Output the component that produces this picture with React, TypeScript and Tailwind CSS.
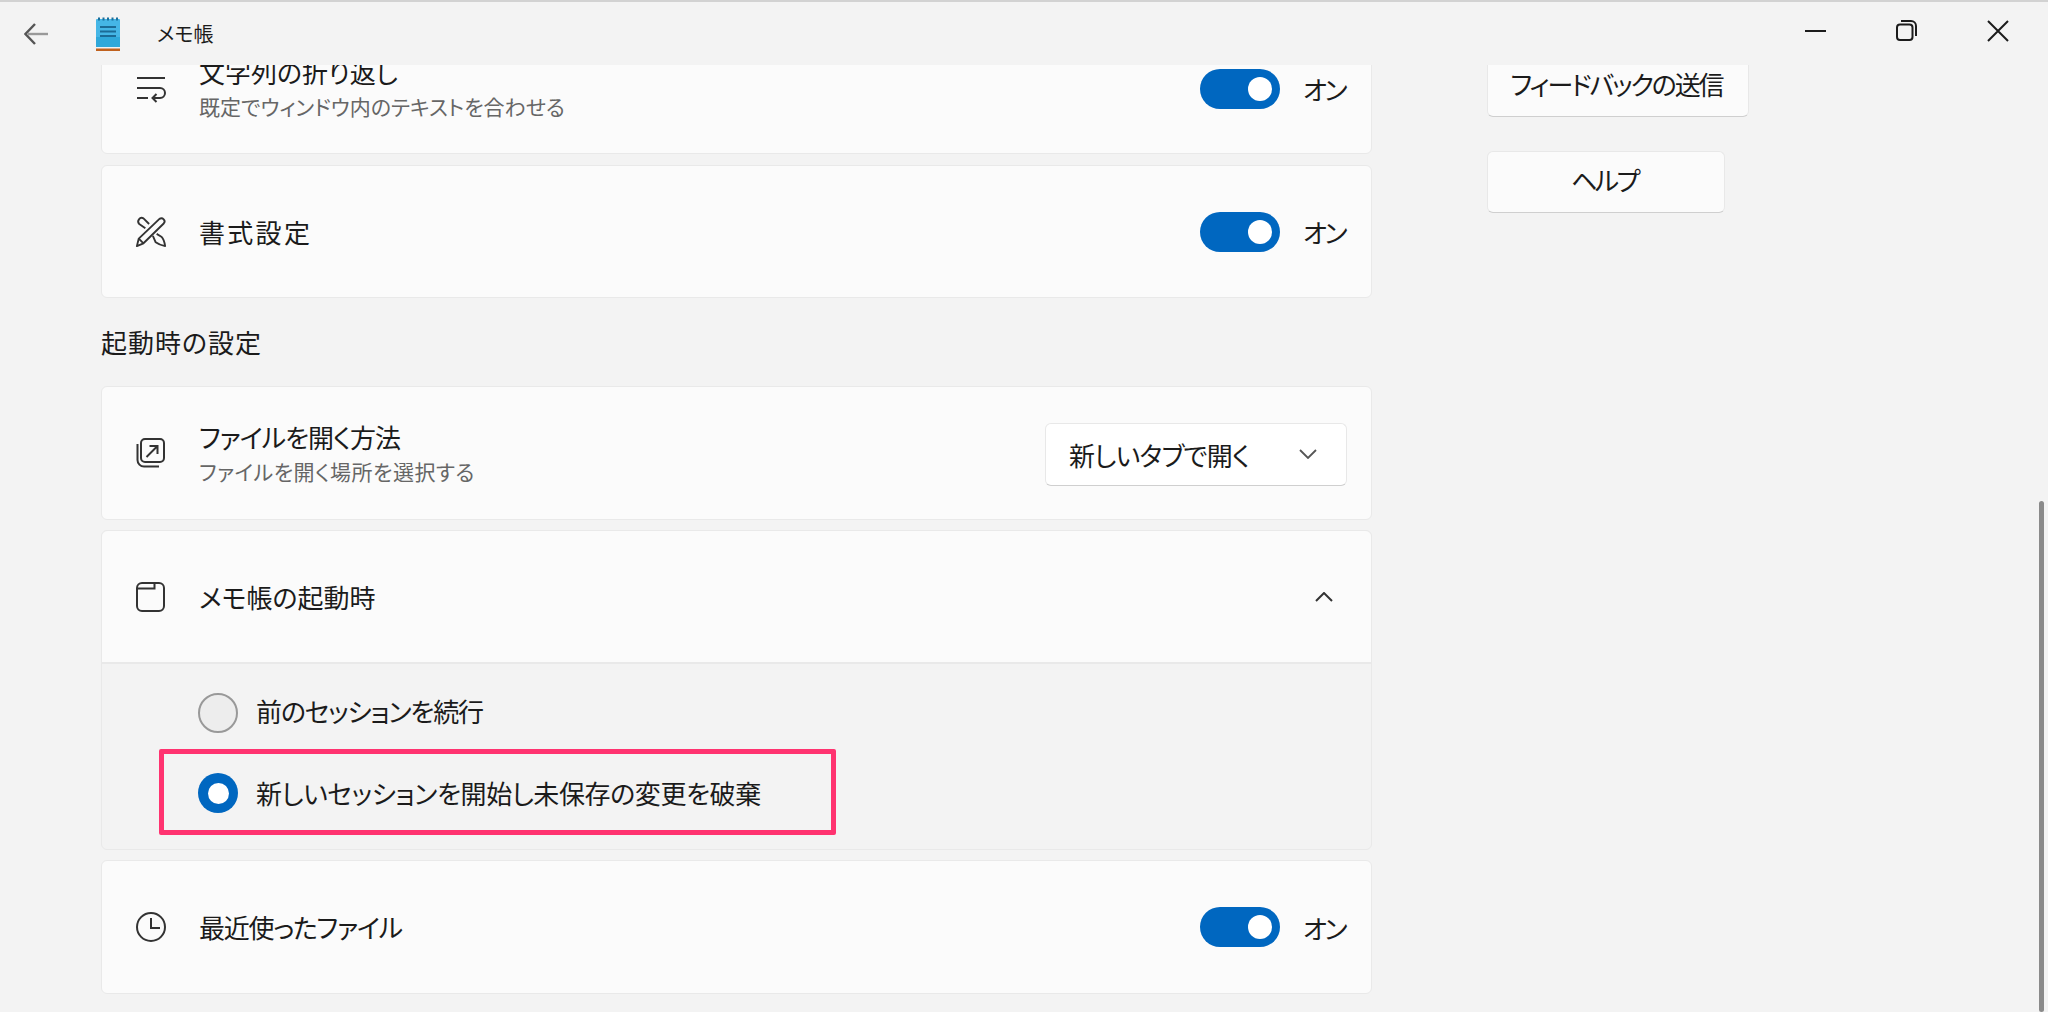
import type { ReactNode } from "react";

function Toggle() {
  return (
    <div className="flex items-center">
      <div className="flex h-[40px] w-[80px] items-center justify-end rounded-full bg-[#0067c0] pr-[8px]">
        <div className="h-[24px] w-[24px] rounded-full bg-white" />
      </div>
      <span className="ml-[23px] w-[43px] pt-[1px] text-[26px] leading-[40px] tracking-[-2.6px] text-[#1b1b1b]">オン</span>
    </div>
  );
}

function WrapIcon() {
  return (
    <svg width="30" height="28" viewBox="0 0 30 28" fill="none" stroke="#333" strokeWidth="2">
      <path d="M1 3h28M1 13h23a4.500 4.500 0 0 1 0 10h-7M1 23h11" />
      <path d="M20.500 19l-4 4 4 4" />
    </svg>
  );
}

function FormatIcon() {
  return (
    <svg width="34" height="34" viewBox="0 0 34 34" fill="none" stroke="#333" strokeWidth="2" strokeLinejoin="round">
      <path d="M2 32l2-8L26 3q2.500-1.500 4.500 0.500t0 4.500L9 29z" />
      <path d="M4 24l5 5" />
      <path d="M11 13L4.500 8.500a3.800 3.800 0 0 1 4.500-6l6 6" />
      <path d="M19 21l3 7q4 3 10 4q-1-7-4-10l-5-3" />
    </svg>
  );
}

function OpenIcon() {
  return (
    <svg width="30" height="30" viewBox="0 0 30 30" fill="none" stroke="#333" strokeWidth="2">
      <rect x="5" y="1" width="23" height="23" rx="4" />
      <path d="M1.500 6v16a6.500 6.500 0 0 0 6.500 6.500h15" />
      <path d="M10.500 19L21 8.500M13.500 8h8v8" />
    </svg>
  );
}

function WindowIcon() {
  return (
    <svg width="30" height="30" viewBox="0 0 30 30" fill="none" stroke="#333" strokeWidth="2">
      <rect x="1" y="1" width="27" height="28" rx="5" />
      <path d="M1 6.500h17.500V1" />
    </svg>
  );
}

function ClockIcon() {
  return (
    <svg width="30" height="32" viewBox="0 0 30 32" fill="none" stroke="#333" strokeWidth="2">
      <circle cx="15" cy="16" r="14" />
      <path d="M15 7v10h9" />
    </svg>
  );
}

function Notepad() {
  return (
    <svg width="24" height="34" viewBox="0 0 24 34">
      <rect x="0" y="2" width="24" height="28" rx="1" fill="#45b6e6" />
      <rect x="0" y="20" width="24" height="10" fill="#2fa8da" />
      <path d="M3 0.500v3M7.500 0.500v3M12 0.500v3M16.500 0.500v3M21 0.500v3" stroke="#1a6f9c" strokeWidth="2" />
      <path d="M4 10h16M4 14.500h16M4 19h16" stroke="#1b6b96" strokeWidth="1.800" />
      <rect x="0" y="30" width="24" height="1.500" fill="#f2f2f2" />
      <rect x="0" y="31.500" width="24" height="2.500" fill="#c0611e" />
    </svg>
  );
}

function Row({ icon, title, titleClass = "", sub, subClass = "", right }: { icon: ReactNode; title: string; titleClass?: string; sub?: string; subClass?: string; right: ReactNode }) {
  return (
    <div className="flex h-full items-center justify-between pl-[33px] pr-[25px]">
      <div className="flex items-center">
        <div className="flex w-[32px] justify-center">{icon}</div>
        <div className={sub ? "ml-[32px]" : "ml-[32px] pb-[1px]"}>
          <div className={`text-[26px] leading-[35px] text-[#1b1b1b] ${titleClass}`}>{title}</div>
          {sub && <div className={`text-[21px] leading-[34px] text-[#666] ${subClass}`}>{sub}</div>}
        </div>
      </div>
      {right}
    </div>
  );
}

const card = "rounded-[6px] border border-[#e9e9e9]";

function Radio({ on, label, labelClass }: { on?: boolean; label: string; labelClass: string }) {
  return (
    <div className="flex h-[40px] items-center">
      {on ? (
        <div className="flex h-[40px] w-[40px] items-center justify-center rounded-full bg-[#0067c0]">
          <div className="h-[21px] w-[21px] rounded-full bg-white" />
        </div>
      ) : (
        <div className="h-[40px] w-[40px] rounded-full border-2 border-[#999] bg-[#ededed]" />
      )}
      <span className={`ml-[18px] text-[26px] text-[#1b1b1b] ${labelClass}`}>{label}</span>
    </div>
  );
}

export default function App() {
  return (
    <div className="relative flex h-[1012px] w-[2048px] flex-col overflow-hidden bg-[#f3f3f3] font-['Noto_Sans_CJK_JP','Noto_Sans',sans-serif] [font-feature-settings:'palt']">
      <header className="relative z-10 flex h-[65px] shrink-0 items-center border-t-2 border-[#d2d2d2] bg-[#f3f3f3] pl-[24px] pr-[5px]">
        <svg width="24" height="22" viewBox="0 0 24 22" fill="none" strokeWidth="2.400">
          <path d="M4 11h20" stroke="#999" />
          <path d="M11 1L1.500 11 11 21" stroke="#555" />
        </svg>
        <div className="ml-[48px]">
          <Notepad />
        </div>
        <span className="ml-[37px] text-[20px] text-[#1b1b1b]">メモ帳</span>
        <div className="mb-[6px] ml-auto flex items-center">
          <div className="flex w-[91px] justify-center">
            <div className="h-[2px] w-[21px] bg-[#1b1b1b]" />
          </div>
          <div className="flex w-[91px] justify-center">
            <svg width="21" height="21" viewBox="0 0 21 21" fill="none" stroke="#1b1b1b" strokeWidth="2">
              <rect x="1" y="4.500" width="15.500" height="15.500" rx="3" />
              <path d="M5 1h10a5 5 0 0 1 5 5v10" />
            </svg>
          </div>
          <div className="flex w-[91px] justify-center">
            <svg width="22" height="22" viewBox="0 0 22 22" fill="none" stroke="#1b1b1b" strokeWidth="2">
              <path d="M1 1l20 20M21 1L1 21" />
            </svg>
          </div>
        </div>
      </header>

      <main className="flex flex-1 pl-[101px]">
        <div className="-mt-[42px] flex w-[1271px] shrink-0 flex-col">
          <div className={`${card} h-[131px] bg-[#fbfbfb]`}>
            <Row icon={<WrapIcon />} title="文字列の折り返し" sub="既定でウィンドウ内のテキストを合わせる" right={<Toggle />} />
          </div>
          <div className={`${card} mt-[11px] h-[133px] bg-[#fbfbfb]`}>
            <Row icon={<FormatIcon />} title="書式設定" titleClass="tracking-[2.300px]" right={<Toggle />} />
          </div>
          <div className="mb-[24px] mt-[24px] text-[26px] leading-[40px] tracking-[1px] text-[#1b1b1b]">起動時の設定</div>
          <div className={`${card} h-[134px] bg-[#fbfbfb]`}>
            <Row
              icon={<OpenIcon />}
              title="ファイルを開く方法"
              titleClass="tracking-[-1px]"
              sub="ファイルを開く場所を選択する"
              subClass="tracking-[0.500px]"
              right={
                <div className="-mr-[1px] mt-[3px] flex h-[63px] w-[302px] items-center justify-between rounded-[6px] border border-[#e8e8e8] border-b-[#cfcfcf] bg-white pb-[1px] pl-[23px] pr-[29px] text-[26px] tracking-[-0.700px] text-[#1b1b1b]">
                  新しいタブで開く
                  <svg width="18" height="10" viewBox="0 0 18 10" fill="none" stroke="#555" strokeWidth="1.800">
                    <path d="M1 1l8 8 8-8" />
                  </svg>
                </div>
              }
            />
          </div>
          <div className={`${card} mt-[10px] h-[320px] bg-[#f3f3f3]`}>
            <div className="h-[133px] rounded-t-[6px] border-b-2 border-[#e9e9e9] bg-[#fbfbfb]">
              <Row
                icon={<WindowIcon />}
                title="メモ帳の起動時"
                right={
                  <svg className="mr-[13px]" width="18" height="10" viewBox="0 0 18 10" fill="none" stroke="#333" strokeWidth="2">
                    <path d="M1 9l8-8 8 8" />
                  </svg>
                }
              />
            </div>
            <div className="relative flex flex-col gap-[40px] pl-[96px] pt-[29px]">
              <Radio label="前のセッションを続行" labelClass="pb-[5px] tracking-[-1.200px]" />
              <Radio on label="新しいセッションを開始し未保存の変更を破棄" labelClass="pb-[1px] tracking-[-0.400px]" />
              <div className="absolute left-[57px] top-[85px] h-[86px] w-[677px] rounded-[2px] border-[5px] border-[#ff3370]" />
            </div>
          </div>
          <div className={`${card} mt-[10px] h-[134px] bg-[#fbfbfb]`}>
            <Row icon={<ClockIcon />} title="最近使ったファイル" titleClass="tracking-[-1.200px]" right={<Toggle />} />
          </div>
        </div>

        <aside className="-mt-[10px] ml-[115px] flex flex-col items-start gap-[34px]">
          <button className="h-[62px] w-[262px] rounded-[6px] border border-[#e8e8e8] border-b-[#cfcfcf] bg-[#fbfbfb] pb-[5px] pr-[3px] text-[26px] tracking-[-2.100px] text-[#1b1b1b]">
            フィードバックの送信
          </button>
          <button className="h-[62px] w-[238px] rounded-[6px] border border-[#e8e8e8] border-b-[#cfcfcf] bg-[#fbfbfb] pb-[5px] pr-[3px] text-[26px] tracking-[-2.500px] text-[#1b1b1b]">
            ヘルプ
          </button>
        </aside>
      </main>

      <div className="absolute bottom-0 left-[2039px] top-[501px] w-[5px] rounded-full bg-[#8a8a8a]" />
    </div>
  );
}
